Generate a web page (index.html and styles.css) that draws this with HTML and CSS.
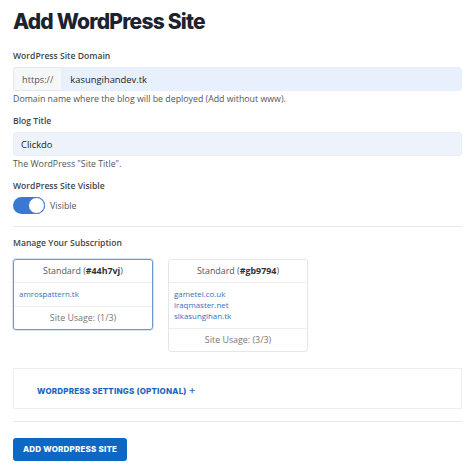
FILE: index.html
```html
<!DOCTYPE html>
<html lang="en">
<head>
    <meta charset="UTF-8">
    <meta name="viewport" content="width=device-width, initial-scale=1.0">
    <title>Add WordPress Site</title>
    <link rel="stylesheet" href="styles.css">
</head>
<body>

    <div class="page">
        <h1>Add WordPress Site</h1>

        <div class="field">
            <label class="field-label">WordPress Site Domain</label>
            <div class="input-group">
                <span class="input-prefix">https://</span>
                <input class="input input-domain" type="text" value="kasungihandev.tk">
            </div>
            <div class="help">Domain name where the blog will be deployed (Add without www).</div>
        </div>

        <div class="field">
            <label class="field-label">Blog Title</label>
            <input class="input input-title" type="text" value="Clickdo">
            <div class="help">The WordPress "Site Title".</div>
        </div>

        <div class="field field-toggle">
            <label class="field-label">WordPress Site Visible</label>
            <div class="toggle-row">
                <span class="toggle"><span class="toggle-knob"></span></span>
                <span class="toggle-text">Visible</span>
            </div>
        </div>

        <hr class="divider">

        <div class="field field-plans">
            <label class="field-label">Manage Your Subscription</label>
            <div class="plans">
                <div class="plan selected">
                    <div class="plan-head">Standard (<b>#44h7vj</b>)</div>
                    <div class="plan-sites">
                        <a href="#">amrospattern.tk</a>
                    </div>
                    <div class="plan-foot">Site Usage: (1/3)</div>
                </div>
                <div class="plan">
                    <div class="plan-head">Standard (<b>#gb9794</b>)</div>
                    <div class="plan-sites">
                        <a href="#">gametel.co.uk</a>
                        <a href="#">iraqmaster.net</a>
                        <a href="#">slkasungihan.tk</a>
                    </div>
                    <div class="plan-foot">Site Usage: (3/3)</div>
                </div>
            </div>
        </div>

        <div class="settings-box">
            <a href="#" class="settings-link">WORDPRESS SETTINGS (OPTIONAL)<span class="plus">+</span></a>
        </div>

        <hr class="divider divider-bottom">

        <button class="btn-add">ADD WORDPRESS SITE</button>
    </div>

</body>
</html>
```

FILE: styles.css
```css
/* Form tambah situs WordPress */
body {
    margin: 0;
    padding: 0;
    background: #fff;
    font-family: "Open Sans", Arial, sans-serif;
    color: #444;
}

.page {
    padding: 8px 12px 0 13px;
}

h1 {
    margin: 0 0 14px;
    font-family: Inter, "Open Sans", sans-serif;
    font-size: 21px;
    font-weight: 800;
    line-height: 28px;
    color: #1d2230;
    letter-spacing: -0.8px;
}

.field {
    margin-bottom: 10px;
}

.field-toggle {
    margin-bottom: 12px;
}

.field-plans {
    margin-bottom: 16px;
}

.field-label {
    display: block;
    font-size: 8.6px;
    font-weight: 600;
    color: #444;
    line-height: 13px;
    margin-bottom: 4px;
}

.input-group {
    display: flex;
}

.input-prefix {
    display: flex;
    align-items: center;
    box-sizing: border-box;
    padding: 0 8px;
    height: 24px;
    font-size: 9.2px;
    color: #555;
    background: #f6f7f9;
    border: 1px solid #e6e8ec;
    border-right: none;
    border-radius: 3px 0 0 3px;
}

.input {
    flex: 1;
    box-sizing: border-box;
    width: 100%;
    height: 24px;
    padding: 0 7px;
    border: 1px solid #e9eef7;
    border-radius: 3px;
    font-family: "Open Sans", Arial, sans-serif;
    font-size: 9.4px;
    color: #222;
    outline: none;
}

.input-domain {
    padding: 0 8px;
    background: #e8f0fe;
    border-color: #e8f0fe;
    border-radius: 0 3px 3px 0;
}

.input-title {
    display: block;
    background: #eef2fb;
}

.help {
    font-size: 8.8px;
    color: #555;
    line-height: 12px;
    margin-top: 2px;
}

.toggle-row {
    display: flex;
    align-items: center;
    gap: 5px;
}

.toggle {
    position: relative;
    display: inline-block;
    width: 32px;
    height: 17px;
    background: #3a78d4;
    border-radius: 9px;
}

.toggle-knob {
    position: absolute;
    top: 0;
    right: 0;
    box-sizing: border-box;
    width: 17px;
    height: 17px;
    background: #fff;
    border: 1.5px solid #3a78d4;
    border-radius: 50%;
}

.toggle-text {
    font-size: 8.8px;
    color: #555;
}

.divider {
    border: none;
    border-top: 1px solid #e8e8e8;
    margin: 0 0 10px;
}

.plans {
    display: flex;
    align-items: flex-start;
    gap: 15px;
    margin-top: 9px;
}

.plan {
    box-sizing: border-box;
    width: 140px;
    border: 1px solid #e4e6ea;
    border-radius: 3px;
    font-size: 8.9px;
}

.plan.selected {
    border-color: #6a95d0;
    box-shadow: 0 0 0 1px #d9e4f4;
}

.plan-head {
    text-align: center;
    padding: 5px 0;
    line-height: 12px;
    color: #555;
    border-bottom: 1px solid #eceef1;
}

.plan-head b {
    color: #333;
}

.plan-sites {
    display: flex;
    flex-direction: column;
    padding: 6px 5px;
    border-bottom: 1px solid #eceef1;
}

.plan-sites a {
    color: #3471c0;
    text-decoration: none;
    font-size: 7.9px;
    line-height: 11px;
}

.plan-foot {
    text-align: center;
    padding: 5px 0;
    line-height: 12px;
    color: #777;
}

.settings-box {
    border: 1px solid #eceef1;
    padding: 13px 23px;
    height: 13px;
    line-height: 13px;
}

.settings-link {
    font-family: Inter, "Open Sans", sans-serif;
    font-size: 8px;
    font-weight: 800;
    color: #1a66c0;
    text-decoration: none;
    letter-spacing: 0.2px;
}

.plus {
    font-weight: 400;
    font-size: 11px;
    margin-left: 2px;
}

.divider-bottom {
    margin-top: 12px;
    margin-bottom: 13px;
}

.btn-add {
    padding: 0 10px;
    height: 23px;
    background: #0d67c4;
    color: #fff;
    border: none;
    border-radius: 3px;
    font-family: Inter, "Open Sans", sans-serif;
    font-size: 8px;
    font-weight: 800;
    letter-spacing: 0.2px;
    cursor: pointer;
}
```
